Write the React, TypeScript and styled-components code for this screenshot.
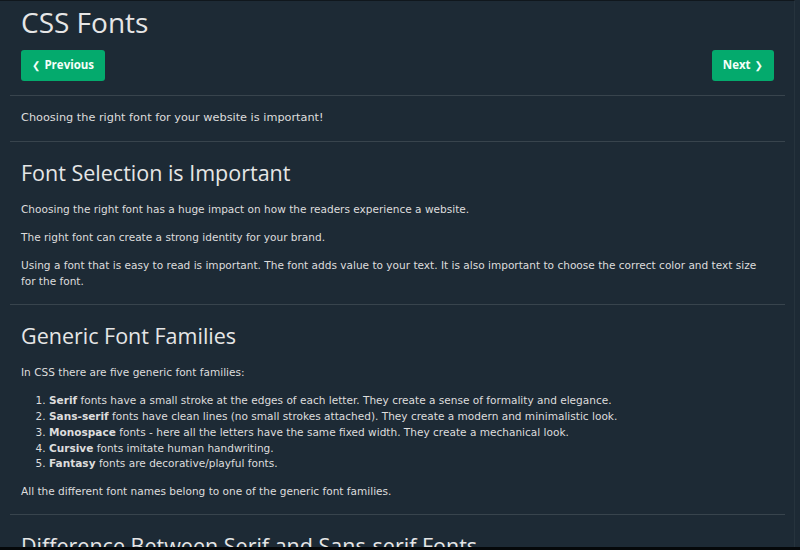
import React from "react";
import styled, { createGlobalStyle } from "styled-components";

const Global = createGlobalStyle`
  html, body { margin: 0; padding: 0; background: #1d2a35; }
  body { font-family: "DejaVu Sans", Verdana, sans-serif; }
`;

const Page = styled.div`
  width: 800px;
  height: 550px;
  display: flex;
  flex-direction: column;
  background: #1d2a35;
  overflow: hidden;
`;

const Frame = styled.div`
  flex: 1;
  min-height: 0;
  overflow: hidden;
  border-top: 1px solid #10171d;
  border-right: 1px solid #26333d;
  margin-right: 5px;
`;

const Main = styled.main`
  width: 775px;
  margin-left: 10px;
  color: #dddddd;
  font-size: 10.55px;
  line-height: 1.5;
`;

const Section = styled.section`
  padding: 0 11px;
`;

const Title = styled.h1`
  font-family: "Open Sans", "Noto Sans", sans-serif;
  font-weight: 400;
  font-size: 28px;
  line-height: 1.2;
  margin: 5px 0 10px;
  color: #e6e6e6;
`;

const Heading = styled.h2`
  font-family: "Open Sans", "Noto Sans", sans-serif;
  font-weight: 400;
  font-size: 21.5px;
  line-height: 1.2;
  margin: 18px 0 17px;
  color: #e6e6e6;
`;

const NavRow = styled.div`
  display: flex;
  justify-content: space-between;
  align-items: center;
`;

const NavButton = styled.a`
  display: inline-flex;
  align-items: center;
  gap: 4px;
  height: 31px;
  padding: 0 11px;
  box-sizing: border-box;
  background: #04aa6d;
  color: #f4fff9;
  border-radius: 3px;
  font-family: "Open Sans", "Noto Sans", sans-serif;
  font-weight: 700;
  font-size: 11.5px;
  text-decoration: none;
`;

const Chevron = styled.span`
  font-family: "DejaVu Sans", sans-serif;
  font-size: 10px;
  font-weight: 700;
`;

const Rule = styled.hr`
  border: 0;
  border-top: 1px solid #38444d;
  margin: 14px 0;
  height: 0;
`;

const P = styled.p<{ $intro?: boolean }>`
  margin: 12px 0;
  font-size: ${(p) => (p.$intro ? "11.3px" : "inherit")};
`;

const List = styled.ol`
  margin: 12px 0;
  padding-left: 28px;
`;

const Item = styled.li``;

const items: [string, string][] = [
  ["Serif", " fonts have a small stroke at the edges of each letter. They create a sense of formality and elegance."],
  ["Sans-serif", " fonts have clean lines (no small strokes attached). They create a modern and minimalistic look."],
  ["Monospace", " fonts - here all the letters have the same fixed width. They create a mechanical look."],
  ["Cursive", " fonts imitate human handwriting."],
  ["Fantasy", " fonts are decorative/playful fonts."],
];

const BottomBar = styled.div`
  height: 3px;
  background: #05080a;
  flex: none;
`;

export default function App() {
  return (
    <Page>
      <Global />
      <Frame>
        <Main>
          <Section>
            <Title>CSS Fonts</Title>
            <NavRow>
              <NavButton href="#"><Chevron>❮</Chevron>Previous</NavButton>
              <NavButton href="#">Next<Chevron>❯</Chevron></NavButton>
            </NavRow>
          </Section>
          <Rule />
          <Section>
            <P $intro>Choosing the right font for your website is important!</P>
          </Section>
          <Rule />
          <Section>
            <Heading>Font Selection is Important</Heading>
            <P>Choosing the right font has a huge impact on how the readers experience a website.</P>
            <P>The right font can create a strong identity for your brand.</P>
            <P>Using a font that is easy to read is important. The font adds value to your text. It is also important to choose the correct color and text size for the font.</P>
          </Section>
          <Rule />
          <Section>
            <Heading>Generic Font Families</Heading>
            <P>In CSS there are five generic font families:</P>
            <List>
              {items.map(([b, t]) => (
                <Item key={b}><b>{b}</b>{t}</Item>
              ))}
            </List>
            <P>All the different font names belong to one of the generic font families.</P>
          </Section>
          <Rule />
          <Section>
            <Heading>Difference Between Serif and Sans-serif Fonts</Heading>
          </Section>
        </Main>
      </Frame>
      <BottomBar />
    </Page>
  );
}
